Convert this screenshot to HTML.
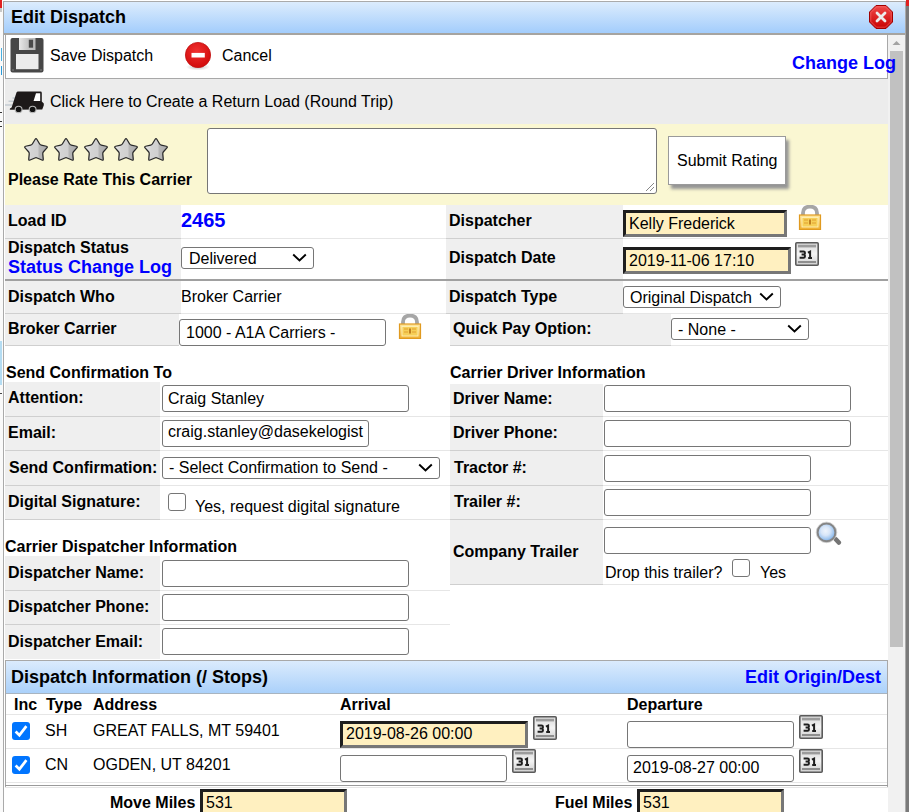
<!DOCTYPE html>
<html><head><meta charset="utf-8"><title>Edit Dispatch</title>
<style>
html,body{margin:0;padding:0;}
body{width:909px;height:812px;overflow:hidden;position:relative;background:#fff;font-family:"Liberation Sans",sans-serif;}
.a{position:absolute;}
.t{position:absolute;white-space:nowrap;font-size:16px;line-height:16px;color:#000;}
.b{font-weight:bold;}
.blue{color:#0000ff;}
.lb{position:absolute;background:#efefef;}
.ln{position:absolute;height:1px;background:#e6e6e6;}
.lnd{position:absolute;height:1px;background:#cfcfcf;}
.inp{position:absolute;box-sizing:border-box;border:1px solid #767676;border-radius:3px;background:#fff;}
.yin{position:absolute;box-sizing:border-box;border-style:solid;border-width:3px;border-color:#1e1e1e #777 #777 #1e1e1e;background:#fff0c0;}
.sel{position:absolute;box-sizing:border-box;border:1px solid #767676;border-radius:3px;background:#fff;}
.sel svg{position:absolute;right:6px;top:50%;margin-top:-5px;}
.cb{position:absolute;box-sizing:border-box;width:18px;height:18px;border:1px solid #767676;border-radius:3px;background:#fff;}
.cbc{position:absolute;width:18px;height:18px;border-radius:3px;background:#0075ff;}
</style></head>
<body>
<!-- background page strips -->
<div class="a" style="left:0;top:0;width:3px;height:812px;background:#fafafa"></div>
<div class="a" style="left:0;top:0;width:2px;height:8px;background:#e02020"></div>
<div class="a" style="left:0;top:8px;width:2px;height:4px;background:#c8c8c8"></div>
<div class="a" style="left:1px;top:48px;width:1px;height:13px;background:#4ab0e0"></div>
<div class="a" style="left:1px;top:66px;width:1px;height:9px;background:#2a9ad8"></div>
<div class="a" style="left:0;top:112px;width:2px;height:1px;background:#333"></div>
<div class="a" style="left:0;top:121px;width:2px;height:1px;background:#333"></div>
<div class="a" style="left:0;top:126px;width:2px;height:1px;background:#333"></div>
<div class="a" style="left:0;top:341px;width:2px;height:44px;background:#b4dcf2"></div>
<div class="a" style="left:0;top:393px;width:2px;height:1px;background:#444"></div>
<div class="a" style="left:906px;top:0;width:3px;height:812px;background:#7a7a7a"></div>
<div class="a" style="left:906px;top:0;width:3px;height:6px;background:#e02020"></div>
<!-- dialog border -->
<div class="a" style="left:3px;top:1px;width:903px;height:811px;box-sizing:border-box;border:1px solid #aaa;border-bottom:none;background:#fff"></div>
<!-- title bar -->
<div class="a" style="left:4px;top:2px;width:901px;height:31px;background:linear-gradient(#dcecfd,#a3cdfc)"></div>
<div class="a" style="left:4px;top:33px;width:901px;height:2px;background:#a6a4a0"></div>
<div class="t b" style="left:11px;top:8px;font-size:18px;line-height:18px;">Edit Dispatch</div>
<!-- close icon -->
<svg class="a" style="left:869px;top:5px" width="24" height="24" viewBox="0 0 24 24">
 <defs><linearGradient id="cg" x1="0" y1="0" x2="0" y2="1"><stop offset="0" stop-color="#f04a4a"/><stop offset="1" stop-color="#c80000"/></linearGradient></defs>
 <polygon points="7,0.5 17,0.5 23.5,7 23.5,17 17,23.5 7,23.5 0.5,17 0.5,7" fill="url(#cg)" stroke="#a00000" stroke-width="1"/>
 <polygon points="7.6,1.8 16.4,1.8 22.2,7.6 22.2,16.4 16.4,22.2 7.6,22.2 1.8,16.4 1.8,7.6" fill="none" stroke="#ff8080" stroke-opacity="0.6" stroke-width="0.8"/>
 <path d="M8,8 L16,16 M16,8 L8,16" stroke="#ececec" stroke-width="2.8" stroke-linecap="round"/>
</svg>

<!-- scrollbar -->
<div class="a" style="left:888px;top:35px;width:17px;height:777px;background:#f1f1f1"></div>
<svg class="a" style="left:888px;top:35px" width="17" height="17"><polygon points="4.5,10 12.5,10 8.5,6" fill="#a3a3a3"/></svg>
<div class="a" style="left:890px;top:51px;width:13px;height:596px;background:#c1c1c1"></div>

<!-- CONTENT -->
<div id="content">
<!-- toolbar -->
<div class="a" style="left:5px;top:35px;width:883px;height:44px;box-sizing:border-box;border:1px solid #a8a8a8;border-top:none;background:#fff"></div>
<svg class="a" style="left:10px;top:38px" width="34" height="35" viewBox="0 0 34 35">
 <defs><linearGradient id="sh" x1="0" y1="0" x2="1" y2="0"><stop offset="0" stop-color="#e8e8e8"/><stop offset="0.5" stop-color="#c8c8c8"/><stop offset="1" stop-color="#b8b8b8"/></linearGradient></defs>
 <rect x="0.5" y="0" width="33" height="34.5" rx="2" fill="#474747"/>
 <rect x="9" y="0" width="16.5" height="12" fill="url(#sh)"/>
 <rect x="18.8" y="1.7" width="4.3" height="8" fill="#4a4a4a"/>
 <rect x="6" y="16" width="22.5" height="15.2" fill="#ececec"/>
 <circle cx="3" cy="32" r="0.8" fill="#888"/><circle cx="31" cy="32" r="0.8" fill="#888"/>
</svg>
<div class="t" style="left:50px;top:48px">Save Dispatch</div>
<svg class="a" style="left:184px;top:41px" width="28" height="30" viewBox="0 0 28 30">
 <defs><radialGradient id="rg" cx="0.45" cy="0.35" r="0.7"><stop offset="0" stop-color="#f03030"/><stop offset="1" stop-color="#d00808"/></radialGradient>
 <radialGradient id="shd" cx="0.5" cy="0.5" r="0.5"><stop offset="0" stop-color="#000" stop-opacity="0.25"/><stop offset="1" stop-color="#000" stop-opacity="0"/></radialGradient></defs>
 <ellipse cx="14" cy="26" rx="12" ry="3.5" fill="url(#shd)"/>
 <circle cx="14" cy="14" r="12.6" fill="url(#rg)" stroke="#c01010" stroke-width="0.8"/>
 <rect x="7.5" y="11.9" width="13.3" height="4.6" fill="#fff"/>
</svg>
<div class="t" style="left:222px;top:48px">Cancel</div>
<div class="t b blue" style="left:792px;top:54px;font-size:18px;line-height:18px;">Change Log</div>

<!-- return load bar -->
<div class="a" style="left:5px;top:79px;width:883px;height:45px;background:#ececec"></div>
<svg class="a" style="left:5px;top:88px" width="40" height="26" viewBox="0 0 40 26">
 <path d="M7.5,10 h3 M3.5,13.2 h6 M0,17 h7.5" stroke="#c4ccd2" stroke-width="1.5"/>
 <path d="M13,3.6 L35.5,3.6 Q36.8,3.6 36.8,5 L36.8,13.5 L38.8,15.5 Q39.2,17 38,19.5 L37.2,21.6 L5.5,21.8 Q4.2,21.8 5,20.6 L6.6,19.5 L11.5,4.6 Q11.9,3.6 13,3.6 Z" fill="#1d1919"/>
 <path d="M31,5.2 L35.2,5.2 L35.2,13 L28.6,13 Z" fill="#fff"/>
 <ellipse cx="13.6" cy="21.4" rx="3.4" ry="3.2" fill="#111" stroke="#b8b8b8" stroke-width="1.1"/>
 <ellipse cx="27.6" cy="21.4" rx="3.4" ry="3.2" fill="#111" stroke="#b8b8b8" stroke-width="1.1"/>
</svg>
<div class="t" style="left:50px;top:94px">Click Here to Create a Return Load (Round Trip)</div>

<!-- rating -->
<div class="a" style="left:5px;top:124px;width:883px;height:81px;background:#faf7d2"></div>
<svg class="a" style="left:22px;top:136px" width="150" height="27" viewBox="0 0 150 27">
 <defs>
  <linearGradient id="stg" x1="0" y1="0" x2="1" y2="0"><stop offset="0" stop-color="#e8e8e8"/><stop offset="0.3" stop-color="#d4d4d4"/><stop offset="0.6" stop-color="#d0d0d0"/><stop offset="0.62" stop-color="#b8b8b8"/><stop offset="1" stop-color="#aaaaaa"/></linearGradient>
  <path id="star" d="M13.18,3.29 Q14.00,1.90 14.82,3.29 L17.50,7.80 Q18.11,8.84 19.29,9.10 L24.41,10.25 Q25.98,10.61 24.92,11.82 L21.46,15.75 Q20.66,16.66 20.77,17.87 L21.26,23.09 Q21.41,24.69 19.92,24.05 L15.11,21.98 Q14.00,21.50 12.89,21.98 L8.08,24.05 Q6.59,24.69 6.74,23.09 L7.23,17.87 Q7.34,16.66 6.54,15.75 L3.08,11.82 Q2.02,10.61 3.59,10.25 L8.71,9.10 Q9.89,8.84 10.50,7.80 Z" stroke-linejoin="round"/>
 </defs>
 <use href="#star" x="0" fill="url(#stg)" stroke="#2a2a2a" stroke-width="1.25"/>
 <use href="#star" x="30" fill="url(#stg)" stroke="#2a2a2a" stroke-width="1.25"/>
 <use href="#star" x="60" fill="url(#stg)" stroke="#2a2a2a" stroke-width="1.25"/>
 <use href="#star" x="90" fill="url(#stg)" stroke="#2a2a2a" stroke-width="1.25"/>
 <use href="#star" x="120" fill="url(#stg)" stroke="#2a2a2a" stroke-width="1.25"/>
</svg>
<div class="t b" style="left:8px;top:172px">Please Rate This Carrier</div>
<div class="a" style="left:207px;top:128px;width:450px;height:66px;box-sizing:border-box;border:1px solid #767676;border-radius:3px;background:#fff"></div>
<svg class="a" style="left:643px;top:180px" width="12" height="12"><path d="M3,11 L11,3 M7,11 L11,7" stroke="#888" stroke-width="1"/></svg>
<div class="a" style="left:668px;top:136px;width:118px;height:49px;box-sizing:border-box;border:1px solid #9a9a9a;background:#fff;box-shadow:3px 4px 3px #959595"></div>
<div class="t" style="left:677px;top:153px">Submit Rating</div>

<!-- symbols -->
<svg width="0" height="0" style="position:absolute">
 <defs>
  <linearGradient id="calg" x1="0" y1="0" x2="0" y2="1"><stop offset="0" stop-color="#d8d8d8"/><stop offset="0.5" stop-color="#f4f4f4"/><stop offset="1" stop-color="#cfcfcf"/></linearGradient>
  <symbol id="calsym" viewBox="0 0 24 24">
   <rect x="0.8" y="0.8" width="22.4" height="22.4" rx="1" fill="url(#calg)" stroke="#5a5a5a" stroke-width="1.6"/>
   <rect x="3" y="2.8" width="18" height="2.6" fill="#9c9c9c"/>
   <rect x="3" y="19" width="18" height="2" fill="#8e8e8e"/>
   <path d="M4.6,9.6 H8.6 Q9.9,9.6 9.9,10.8 V11.4 Q9.9,12.6 8.6,12.6 H6.6 M8.6,12.6 Q9.9,12.6 9.9,13.8 V14.6 Q9.9,15.8 8.6,15.8 H4.6" fill="none" stroke="#1e1e1e" stroke-width="2"/>
   <path d="M12.9,10.6 L15.1,9.6 V15.8 M13.2,15.9 H17" fill="none" stroke="#1e1e1e" stroke-width="2"/>
  </symbol>
  <linearGradient id="lkg" x1="0" y1="0" x2="0" y2="1"><stop offset="0" stop-color="#ffe9a0"/><stop offset="1" stop-color="#f0b030"/></linearGradient>
  <symbol id="locksym" viewBox="0 0 24 25">
   <path d="M5,10 L5,8 Q5,1.6 12,1.6 Q19,1.6 19,8 L19,10" fill="none" stroke="#a6a6a6" stroke-width="3.8"/>
   <rect x="1.5" y="10" width="21" height="14.5" fill="url(#lkg)" stroke="#e09a20" stroke-width="1.2"/>
   <rect x="4" y="12.5" width="16" height="9.5" fill="#f6cf58" stroke="#fff3c0" stroke-width="0.8"/>
   <path d="M6,15 h4 M6,18 h4 M14,15 h4 M14,18 h4" stroke="#e0a030" stroke-width="1"/>
   <rect x="11" y="14.5" width="2" height="5" fill="#c08020"/>
  </symbol>
 </defs>
</svg>

<!-- top table rows -->
<div class="lb" style="left:5px;top:205px;width:176px;height:33px"></div>
<div class="lb" style="left:446px;top:205px;width:177px;height:33px"></div>
<div class="ln" style="left:5px;top:238px;width:883px"></div>
<div class="lnd" style="left:5px;top:238px;width:176px"></div>
<div class="lnd" style="left:446px;top:238px;width:177px"></div>
<div class="t b" style="left:8px;top:213px">Load ID</div>
<div class="t b blue" style="left:181px;top:210px;font-size:20px;line-height:20px">2465</div>
<div class="t b" style="left:449px;top:213px">Dispatcher</div>
<div class="yin" style="left:623px;top:210px;width:164px;height:27px"></div>
<div class="t" style="left:629px;top:216px">Kelly Frederick</div>
<svg class="a" style="left:798px;top:205px" width="24" height="25"><use href="#locksym"/></svg>

<div class="lb" style="left:5px;top:239px;width:176px;height:40px"></div>
<div class="lb" style="left:446px;top:239px;width:177px;height:40px"></div>
<div class="a" style="left:5px;top:279px;width:883px;height:2px;background:#a0a0a0"></div>
<div class="t b" style="left:8px;top:240px">Dispatch Status</div>
<div class="t b blue" style="left:8px;top:258px;font-size:18px;line-height:18px">Status Change Log</div>
<div class="sel" style="left:181px;top:247px;width:133px;height:22px"><svg width="15" height="9" viewBox="0 0 15 9"><path d="M1.2,1.5 L7.5,7.4 L13.8,1.5" fill="none" stroke="#000" stroke-width="1.9"/></svg></div>
<div class="t" style="left:189px;top:251px">Delivered</div>
<div class="t b" style="left:449px;top:250px">Dispatch Date</div>
<div class="yin" style="left:623px;top:247px;width:168px;height:27px"></div>
<div class="t" style="left:629px;top:253px">2019-11-06 17:10</div>
<svg class="a cal" style="left:795px;top:242px" width="24" height="24"><use href="#calsym"/></svg>

<div class="lb" style="left:5px;top:281px;width:176px;height:32px"></div>
<div class="lb" style="left:446px;top:281px;width:177px;height:32px"></div>
<div class="ln" style="left:5px;top:313px;width:883px"></div>
<div class="lnd" style="left:5px;top:313px;width:176px"></div>
<div class="lnd" style="left:446px;top:313px;width:177px"></div>
<div class="t b" style="left:8px;top:289px">Dispatch Who</div>
<div class="t" style="left:181px;top:289px">Broker Carrier</div>
<div class="t b" style="left:449px;top:289px">Dispatch Type</div>
<div class="sel" style="left:623px;top:286px;width:158px;height:22px"><svg width="15" height="9" viewBox="0 0 15 9"><path d="M1.2,1.5 L7.5,7.4 L13.8,1.5" fill="none" stroke="#000" stroke-width="1.9"/></svg></div>
<div class="t" style="left:630px;top:290px">Original Dispatch</div>

<div class="lb" style="left:5px;top:314px;width:174px;height:31px"></div>
<div class="lnd" style="left:5px;top:345px;width:174px"></div>
<div class="t b" style="left:8px;top:321px">Broker Carrier</div>
<div class="inp" style="left:179px;top:319px;width:207px;height:27px"></div>
<div class="t" style="left:186px;top:325px">1000 - A1A Carriers -</div>
<svg class="a" style="left:398px;top:314px" width="24" height="25"><use href="#locksym"/></svg>
<div class="lb" style="left:450px;top:314px;width:221px;height:31px"></div>
<div class="ln" style="left:450px;top:345px;width:438px"></div>
<div class="lnd" style="left:450px;top:345px;width:221px"></div>
<div class="t b" style="left:453px;top:321px">Quick Pay Option:</div>
<div class="sel" style="left:671px;top:318px;width:138px;height:22px"><svg width="15" height="9" viewBox="0 0 15 9"><path d="M1.2,1.5 L7.5,7.4 L13.8,1.5" fill="none" stroke="#000" stroke-width="1.9"/></svg></div>
<div class="t" style="left:678px;top:322px">- None -</div>

<!-- send confirmation / driver info -->
<div class="t b" style="left:6px;top:365px">Send Confirmation To</div>
<div class="t b" style="left:450px;top:365px">Carrier Driver Information</div>

<div class="lb" style="left:5px;top:382px;width:155px;height:34px"></div>
<div class="lb" style="left:450px;top:384px;width:153px;height:32px"></div>
<div class="ln" style="left:5px;top:416px;width:883px"></div>
<div class="lnd" style="left:5px;top:416px;width:155px"></div>
<div class="lnd" style="left:450px;top:416px;width:153px"></div>
<div class="t b" style="left:8px;top:390px">Attention:</div>
<div class="inp" style="left:162px;top:385px;width:247px;height:27px"></div>
<div class="t" style="left:168px;top:391px">Craig Stanley</div>
<div class="t b" style="left:453px;top:391px">Driver Name:</div>
<div class="inp" style="left:604px;top:385px;width:247px;height:27px"></div>

<div class="lb" style="left:5px;top:417px;width:155px;height:33px"></div>
<div class="lb" style="left:450px;top:417px;width:153px;height:33px"></div>
<div class="ln" style="left:5px;top:450px;width:883px"></div>
<div class="lnd" style="left:5px;top:450px;width:155px"></div>
<div class="lnd" style="left:450px;top:450px;width:153px"></div>
<div class="t b" style="left:8px;top:425px">Email:</div>
<div class="inp" style="left:162px;top:420px;width:207px;height:27px"></div>
<div class="t" style="left:168px;top:424px">craig.stanley@dasekelogist</div>
<div class="t b" style="left:453px;top:425px">Driver Phone:</div>
<div class="inp" style="left:604px;top:420px;width:247px;height:27px"></div>

<div class="lb" style="left:5px;top:451px;width:155px;height:34px"></div>
<div class="lb" style="left:450px;top:451px;width:153px;height:34px"></div>
<div class="ln" style="left:5px;top:485px;width:883px"></div>
<div class="lnd" style="left:5px;top:485px;width:155px"></div>
<div class="lnd" style="left:450px;top:485px;width:153px"></div>
<div class="t b" style="left:9px;top:460px">Send Confirmation:</div>
<div class="sel" style="left:162px;top:457px;width:278px;height:22px"><svg width="15" height="9" viewBox="0 0 15 9"><path d="M1.2,1.5 L7.5,7.4 L13.8,1.5" fill="none" stroke="#000" stroke-width="1.9"/></svg></div>
<div class="t" style="left:169px;top:460px">- Select Confirmation to Send -</div>
<div class="t b" style="left:454px;top:460px">Tractor #:</div>
<div class="inp" style="left:604px;top:455px;width:207px;height:27px"></div>

<div class="lb" style="left:5px;top:486px;width:155px;height:33px"></div>
<div class="lb" style="left:450px;top:486px;width:153px;height:33px"></div>
<div class="ln" style="left:5px;top:519px;width:883px"></div>
<div class="lnd" style="left:5px;top:519px;width:155px"></div>
<div class="lnd" style="left:450px;top:519px;width:153px"></div>
<div class="t b" style="left:8px;top:494px">Digital Signature:</div>
<div class="cb" style="left:168px;top:493px"></div>
<div class="t" style="left:195px;top:499px">Yes, request digital signature</div>
<div class="t b" style="left:454px;top:494px">Trailer #:</div>
<div class="inp" style="left:604px;top:489px;width:207px;height:27px"></div>

<div class="lb" style="left:450px;top:520px;width:153px;height:64px"></div>
<div class="ln" style="left:450px;top:584px;width:438px"></div>
<div class="lnd" style="left:450px;top:584px;width:153px"></div>
<div class="t b" style="left:453px;top:544px">Company Trailer</div>
<div class="inp" style="left:604px;top:527px;width:207px;height:27px"></div>
<svg class="a" style="left:814px;top:520px" width="28" height="26" viewBox="0 0 28 26">
 <defs><radialGradient id="mg" cx="0.45" cy="0.42" r="0.55"><stop offset="0" stop-color="#eef4fc"/><stop offset="0.45" stop-color="#d8e6f8"/><stop offset="0.8" stop-color="#a4c8f0"/><stop offset="1" stop-color="#84b2e6"/></radialGradient></defs>
 <path d="M22,19.5 L24.8,22.5" stroke="#747474" stroke-width="4.6" stroke-linecap="round"/>
 <circle cx="12.5" cy="12.4" r="9" fill="url(#mg)" stroke="#858585" stroke-width="2.2"/>
 <circle cx="12.5" cy="12.4" r="10.3" fill="none" stroke="#c8c8c8" stroke-width="0.7"/>
</svg>
<div class="t" style="left:605px;top:565px">Drop this trailer?</div>
<div class="cb" style="left:732px;top:559px"></div>
<div class="t" style="left:760px;top:565px">Yes</div>

<!-- carrier dispatcher -->
<div class="t b" style="left:5px;top:539px">Carrier Dispatcher Information</div>
<div class="lb" style="left:5px;top:556px;width:155px;height:34px"></div>
<div class="ln" style="left:5px;top:590px;width:445px"></div>
<div class="lnd" style="left:5px;top:590px;width:155px"></div>
<div class="t b" style="left:8px;top:565px">Dispatcher Name:</div>
<div class="inp" style="left:162px;top:560px;width:247px;height:27px"></div>

<div class="lb" style="left:5px;top:591px;width:155px;height:33px"></div>
<div class="ln" style="left:5px;top:624px;width:445px"></div>
<div class="lnd" style="left:5px;top:624px;width:155px"></div>
<div class="t b" style="left:8px;top:599px">Dispatcher Phone:</div>
<div class="inp" style="left:162px;top:594px;width:247px;height:27px"></div>

<div class="lb" style="left:5px;top:625px;width:155px;height:34px"></div>
<div class="t b" style="left:8px;top:634px">Dispatcher Email:</div>
<div class="inp" style="left:162px;top:628px;width:247px;height:27px"></div>

<!-- dispatch information -->
<div class="a" style="left:5px;top:660px;width:883px;height:127px;box-sizing:border-box;border:1px solid #a8a8a8;border-bottom:none;"></div>
<div class="a" style="left:6px;top:661px;width:881px;height:33px;background:linear-gradient(#dbebfd,#a9d0fa)"></div>
<div class="a" style="left:6px;top:693px;width:881px;height:1px;background:#a8b4c0"></div>
<div class="t b" style="left:11px;top:668px;font-size:18px;line-height:18px">Dispatch Information (/ Stops)</div>
<div class="t b blue" style="left:745px;top:668px;font-size:18px;line-height:18px">Edit Origin/Dest</div>
<div class="t b" style="left:14px;top:697px">Inc</div>
<div class="t b" style="left:46px;top:697px">Type</div>
<div class="t b" style="left:93px;top:697px">Address</div>
<div class="t b" style="left:340px;top:697px">Arrival</div>
<div class="t b" style="left:627px;top:697px">Departure</div>
<div class="ln" style="left:6px;top:714px;width:881px"></div>
<div class="cbc" style="left:12px;top:722px"><svg width="18" height="18"><path d="M3.6,9.6 L7.4,13.2 L14.4,4.2" fill="none" stroke="#fff" stroke-width="2.7"/></svg></div>
<div class="t" style="left:45px;top:723px">SH</div>
<div class="t" style="left:93px;top:723px">GREAT FALLS, MT 59401</div>
<div class="yin" style="left:340px;top:721px;width:188px;height:27px"></div>
<div class="t" style="left:346px;top:726px">2019-08-26 00:00</div>
<svg class="a" style="left:533px;top:716px" width="24" height="24"><use href="#calsym"/></svg>
<div class="inp" style="left:627px;top:721px;width:167px;height:27px"></div>
<svg class="a" style="left:799px;top:715px" width="24" height="24"><use href="#calsym"/></svg>
<div class="ln" style="left:6px;top:748px;width:881px"></div>
<div class="cbc" style="left:12px;top:756px"><svg width="18" height="18"><path d="M3.6,9.6 L7.4,13.2 L14.4,4.2" fill="none" stroke="#fff" stroke-width="2.7"/></svg></div>
<div class="t" style="left:45px;top:757px">CN</div>
<div class="t" style="left:93px;top:757px">OGDEN, UT 84201</div>
<div class="inp" style="left:340px;top:755px;width:167px;height:27px"></div>
<svg class="a" style="left:512px;top:749px" width="24" height="24"><use href="#calsym"/></svg>
<div class="inp" style="left:627px;top:755px;width:167px;height:27px"></div>
<div class="t" style="left:633px;top:760px">2019-08-27 00:00</div>
<svg class="a" style="left:799px;top:749px" width="24" height="24"><use href="#calsym"/></svg>
<div class="ln" style="left:6px;top:782px;width:881px"></div>
<div class="a" style="left:5px;top:785px;width:883px;height:1px;background:#9a9a9a"></div>
<div class="ln" style="left:5px;top:787px;width:883px"></div>

<div class="t b" style="left:110px;top:795px">Move Miles</div>
<div class="yin" style="left:200px;top:789px;width:147px;height:27px"></div>
<div class="t" style="left:206px;top:795px">531</div>
<div class="t b" style="left:555px;top:795px">Fuel Miles</div>
<div class="yin" style="left:637px;top:789px;width:147px;height:27px"></div>
<div class="t" style="left:643px;top:795px">531</div>

</div>

</body></html>
